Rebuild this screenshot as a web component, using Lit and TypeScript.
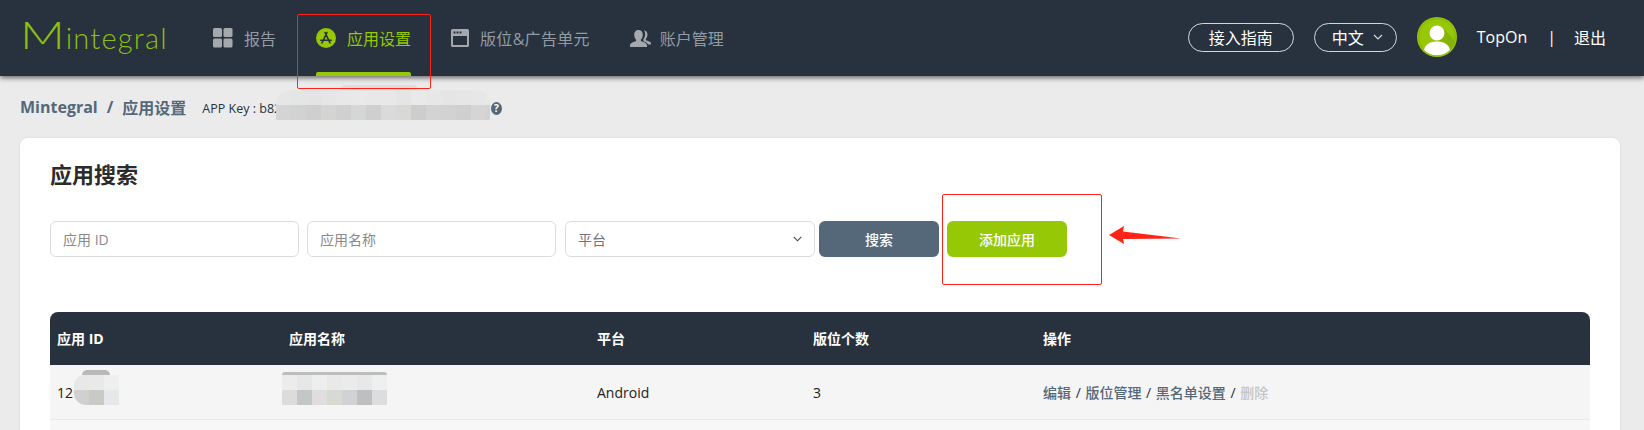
import { LitElement, css, html, svg } from "lit";
import { customElement, property } from "lit/decorators.js";
import { classMap } from "lit/directives/class-map.js";

type Patch = { x: number; y: number; w: number; radius: string; cols: string[][] };

// mosaic blocks that hide the app key and the ids in the reference
@customElement("redact-patch")
export class RedactPatch extends LitElement {
    static styles = css`
    :host {
      position: absolute;
      display: block;
      overflow: hidden;
    }
    .row {
      display: flex;
    }
    .cell {
      flex: none;
      width: 15px;
      height: 15px;
    }
  `;

    @property({ type: Array }) rows: string[][] = [];

    render() {
        return this.rows.map(
            (row) => html`<div class="row">${row.map((c) => html`<div class="cell" style="background:${c}"></div>`)}</div>`
        );
    }
}

const navIcons = {
    grid: svg`<rect x="0" y="0" width="9" height="9" rx="1.5"/><rect x="10.5" y="0" width="9" height="9" rx="1.5"/><rect x="0" y="10.5" width="9" height="9" rx="1.5"/><rect x="10.5" y="10.5" width="9" height="9" rx="1.5"/>`,
    store: svg`<circle cx="10" cy="10" r="10"/><path d="M9 4.500 14 14.800M11 4.500 6 14.800M4.800 12.300h10.400" fill="none" stroke="#27323e" stroke-width="1.600" stroke-linecap="round"/>`,
    win: svg`<path fill-rule="evenodd" d="M1.500 0h15A1.500 1.500 0 0 1 18 1.500v15a1.500 1.500 0 0 1-1.500 1.500h-15A1.500 1.500 0 0 1 0 16.500v-15A1.500 1.500 0 0 1 1.500 0zM2 7v9h14V7zM2.500 2.500v2h2v-2zM5.500 2.500v2h2v-2zM8.500 2.500v2h2v-2z"/>`,
    users: svg`<path d="M8.500 1c3 0 4.300 2.300 4.300 4.900 0 2.100-1 3.800-1.900 4.700v1.500c2.500.8 5.600 1.700 6.100 3.800v2H0v-2c.5-2.100 3.600-3 6.100-3.800v-1.500C5.200 9.700 4.200 8 4.200 5.900 4.200 3.300 5.500 1 8.500 1z"/><path d="M14 1.200c2.300.2 3.500 2.200 3.500 4.400 0 1.900-.8 3.500-1.600 4.200v1.400c2 .6 4.500 1.500 5.300 3.200v1.100h-2.800c-1-1.600-3.400-2.500-5-3.200V10c1-1 1.700-2.600 1.700-4.500 0-1.800-.4-3.300-1.100-4.300z"/>`,
};

@customElement("app-root")
export class AppRoot extends LitElement {
    static styles = css`
    :host {
      display: block;
      position: relative;
      width: 1644px;
      height: 430px;
      overflow: hidden;
      background: #ebebeb;
      font-family: "Open Sans", "Noto Sans CJK SC", sans-serif;
      font-size: 14px;
      color: #27323e;
    }

    .topbar {
      display: flex;
      align-items: center;
      height: 76px;
      padding: 0 38px 0 20px;
      box-sizing: border-box;
      background: #27323e;
      box-shadow: 0 2px 5px rgba(0, 0, 0, 0.55);
      position: relative;
    }
    .logo {
      width: 193px;
      font-family: "Lato", sans-serif;
      font-weight: 300;
      font-size: 29px;
      line-height: 70px;
      letter-spacing: 1.200px;
      color: #8fbe12;
      position: relative;
      top: -2px;
    }
    .logo b {
      display: inline-block;
      font-weight: 300;
      font-size: 38px;
      margin-right: 10px;
      transform: scaleX(1.3);
      transform-origin: left center;
    }
    .nav {
      display: flex;
      gap: 40px;
      align-self: stretch;
    }
    .nav-item {
      display: flex;
      align-items: center;
      gap: 11px;
      position: relative;
      font-size: 16px;
      color: #929ba4;
      box-sizing: border-box;
    }
    .nav-item svg {
      fill: #a5a9ae;
      flex: none;
    }
    .nav-item.wide {
      letter-spacing: 0.3px;
    }
    .nav-item.tight {
      gap: 9px;
    }
    .nav-item.active {
      color: #96c805;
    }
    .nav-item.active svg {
      fill: #96c805;
    }
    .nav-item.active::after {
      content: "";
      position: absolute;
      left: 0;
      right: 0;
      bottom: 0;
      height: 4px;
      border-radius: 2px 2px 0 0;
      background: #96c805;
    }

    .user {
      margin-left: auto;
      display: flex;
      align-items: center;
      color: #fff;
      font-size: 16px;
      padding-bottom: 3px;
    }
    .pill {
      display: flex;
      align-items: center;
      justify-content: center;
      gap: 9px;
      height: 29px;
      box-sizing: border-box;
      border: 1px solid #d5d8da;
      border-radius: 15px;
      margin-top: 1px;
    }
    .pill.guide {
      width: 106px;
      margin-right: 20px;
    }
    .pill.lang {
      width: 83px;
      margin-right: 20px;
      padding-left: 4px;
    }
    .avatar {
      margin-right: 20px;
      display: block;
    }
    .divider {
      margin: 0 18px 0 20px;
    }

    .crumbs {
      display: flex;
      align-items: center;
      height: 62px;
      padding-left: 20px;
      color: #54687a;
      font-size: 16px;
      font-weight: 700;
    }
    .crumb-sep {
      margin: 0 9px;
    }
    .app-key {
      margin-left: 16px;
      font-size: 12.500px;
      font-weight: 400;
      color: #27323e;
      position: relative;
      top: 1px;
    }
    .help {
      position: absolute;
      left: 491px;
      top: 102px;
      width: 11px;
      height: 13px;
      border-radius: 50%;
      background: #54687a;
      color: #fff;
      font-size: 10px;
      font-weight: 700;
      line-height: 13px;
      text-align: center;
    }

    .card {
      width: 1600px;
      height: 320px;
      margin-left: 20px;
      padding: 19px 30px 0;
      box-sizing: border-box;
      background: #fff;
      border-radius: 8px 8px 0 0;
      box-shadow: 0 0 3px rgba(0, 0, 0, 0.08);
    }
    .card h2 {
      margin: 0;
      font-size: 22px;
      line-height: 34px;
      font-weight: 700;
      color: #2b2b2b;
    }

    .search {
      display: flex;
      margin-top: 30px;
      height: 36px;
    }
    .field {
      width: 249px;
      height: 36px;
      box-sizing: border-box;
      margin-right: 8px;
      padding: 0 12px;
      border: 1px solid #dcdcdc;
      border-radius: 6px;
      background: #fff;
      font: inherit;
      font-size: 14px;
      color: #757575;
      outline: none;
    }
    .field.name {
      margin-right: 9px;
    }
    .field::placeholder {
      color: #8a8a8a;
      opacity: 1;
    }
    .select {
      display: flex;
      align-items: center;
      justify-content: space-between;
      width: 250px;
      margin-right: 4px;
    }
    .btn {
      display: flex;
      align-items: center;
      justify-content: center;
      width: 120px;
      height: 36px;
      border-radius: 6px;
      color: #fff;
      font-size: 14px;
      font-weight: 500;
    }
    .btn.slate {
      background: #54687a;
      margin-right: 8px;
    }
    .btn.green {
      background: #96c805;
    }

    .table {
      margin-top: 55px;
      border-radius: 8px 8px 0 0;
      overflow: hidden;
    }
    .tr {
      display: grid;
      grid-template-columns: 232px 308px 216px 230px 1fr;
      padding-left: 7px;
      align-items: center;
    }
    .tr.head {
      height: 53px;
      background: #27323e;
      color: #fff;
      font-weight: 700;
      font-size: 14px;
      padding-bottom: 2px;
      box-sizing: border-box;
    }
    .tr.body {
      height: 55px;
      box-sizing: border-box;
      background: #f5f5f5;
      border-bottom: 1px solid #e8e8e8;
      color: #222;
      font-size: 14px;
    }
    .tr.filler {
      height: 12px;
      background: #f7f7f7;
    }
    .ops {
      color: #54687a;
      font-weight: 500;
      font-size: 14px;
      word-spacing: 1px;
    }
    .ops .sep {
      color: #27323e;
      font-weight: 400;
    }
    .ops .off {
      color: #c4c4c4;
    }

    .note {
      position: absolute;
      border: 1px solid #ff2318;
      border-radius: 2px;
      box-sizing: border-box;
      pointer-events: none;
    }
    .note.nav-note {
      left: 297px;
      top: 14px;
      width: 134px;
      height: 75px;
    }
    .note.add-note {
      left: 942px;
      top: 194px;
      width: 160px;
      height: 91px;
    }
    .arrow {
      position: absolute;
      left: 1105px;
      top: 222px;
    }
    .cap {
      position: absolute;
    }
    .cap.key {
      left: 340px;
      top: 85px;
      width: 78px;
      height: 5px;
      border-radius: 10px 10px 0 0;
      background: #dddeda;
    }
    .cap.id {
      left: 82px;
      top: 370px;
      width: 28px;
      height: 5px;
      border-radius: 14px 14px 0 0;
      background: #b9b9b9;
    }
    .cap.name {
      left: 282px;
      top: 372px;
      width: 105px;
      height: 3px;
      border-radius: 3px 3px 0 0;
      background: #bdbdbd;
    }
  `;

    patches: Patch[] = [
        {
            x: 276,
            y: 90,
            w: 214,
            radius: "14px 14px 0 0",
            cols: [
                ["#e6e6e6", "#e4e5e5", "#e4e4e4", "#e6e6e6", "#e7e8e7", "#e9e9e9", "#e8e8e8", "#e8e8e8", "#e4e5e4", "#e9e9e8", "#e7e7e7", "#e5e5e5", "#e6e6e6", "#e7e7e7", "#e8e8e8"],
                ["#d4d4d4", "#d2d2d2", "#cfcfcf", "#d4d4d2", "#cfd0cf", "#d5d6d6", "#cfcfcf", "#d9dada", "#d8d8d5", "#cdcdcd", "#d3d3d3", "#d2d2d0", "#cfcfcf", "#d5d5d5", "#d2d2d2"],
            ],
        },
        {
            x: 74,
            y: 375,
            w: 45,
            radius: "10px 0 0 12px",
            cols: [
                ["#e8e8e8", "#e8e9e8", "#eeefef"],
                ["#d0d0d0", "#c9cac5", "#e6e7e8"],
            ],
        },
        {
            x: 282,
            y: 375,
            w: 105,
            radius: "0",
            cols: [
                ["#ececec", "#e6e7e7", "#edeeee", "#e9e9e7", "#ebebeb", "#e7e8e9", "#eef0ef"],
                ["#dddcda", "#c3c7c8", "#dfdddd", "#d7d9d3", "#d1d2d5", "#bfbfbf", "#dcddde"],
            ],
        },
    ];

    navItem(icon: keyof typeof navIcons, label: string, opts: { active?: boolean; wide?: boolean; tight?: boolean; w?: number; h?: number } = {}) {
        const { active = false, wide = false, tight = false, w = 20, h = 20 } = opts;
        return html`<div class=${classMap({ "nav-item": true, active, wide, tight })}>
            <svg width=${w} height=${h} viewBox="0 0 ${w} ${h}">${navIcons[icon]}</svg>
            <span>${label}</span>
        </div>`;
    }

    render() {
        return html`
            <div class="topbar">
                <div class="logo"><b>M</b>integral</div>
                <div class="nav">
                    ${this.navItem("grid", "报告")}
                    ${this.navItem("store", "应用设置", { active: true })}
                    ${this.navItem("win", "版位&广告单元", { wide: true, w: 18, h: 18 })}
                    ${this.navItem("users", "账户管理", { tight: true, w: 21, h: 19 })}
                </div>
                <div class="user">
                    <div class="pill guide">接入指南</div>
                    <div class="pill lang">
                        <span>中文</span>
                        <svg width="10" height="6" viewBox="0 0 10 6"><path d="M1 1l4 4 4-4" fill="none" stroke="#d5d8da" stroke-width="1.200"/></svg>
                    </div>
                    <svg class="avatar" width="40" height="40" viewBox="0 0 40 40">
                        <circle cx="20" cy="20" r="20" fill="#96c805"/>
                        <circle cx="20" cy="20" r="18.300" fill="none" stroke="#7da50d" stroke-width="0.600"/>
                        <path d="M24 9 38 24a19 19 0 0 1-8 12L20 22z" fill="#86b304"/>
                        <circle cx="20" cy="16" r="7.500" fill="#fff"/>
                        <path d="M7 33c1-6 7-8.500 13-8.500S32 27 33 33a18.500 18.500 0 0 1-26 0z" fill="#fff"/>
                    </svg>
                    <span>TopOn</span>
                    <span class="divider">|</span>
                    <span>退出</span>
                </div>
            </div>

            <div class="crumbs">
                <span>Mintegral</span><span class="crumb-sep">/</span><span>应用设置</span>
                <span class="app-key">APP Key : b82</span>
            </div>

            <div class="card">
                <h2>应用搜索</h2>
                <div class="search">
                    <input class="field" placeholder="应用 ID" />
                    <input class="field name" placeholder="应用名称" />
                    <div class="field select">
                        <span>平台</span>
                        <svg width="9" height="6" viewBox="0 0 9 6"><path d="M.7.800l3.800 4 3.800-4" fill="none" stroke="#444" stroke-width="1.100"/></svg>
                    </div>
                    <div class="btn slate">搜索</div>
                    <div class="btn green">添加应用</div>
                </div>

                <div class="table">
                    <div class="tr head">
                        <div>应用 ID</div>
                        <div>应用名称</div>
                        <div>平台</div>
                        <div>版位个数</div>
                        <div>操作</div>
                    </div>
                    <div class="tr body">
                        <div>12</div>
                        <div></div>
                        <div>Android</div>
                        <div>3</div>
                        <div class="ops">
                            编辑 <span class="sep">/</span> 版位管理 <span class="sep">/</span> 黑名单设置 <span class="sep">/</span>
                            <span class="off">删除</span>
                        </div>
                    </div>
                    <div class="tr filler"></div>
                </div>
            </div>

            <div class="cap key"></div>
            <div class="cap id"></div>
            <div class="cap name"></div>
            ${this.patches.map(
                (p) => html`<redact-patch style="left:${p.x}px;top:${p.y}px;width:${p.w}px;border-radius:${p.radius}" .rows=${p.cols}></redact-patch>`
            )}
            <div class="help">?</div>

            <div class="note nav-note"></div>
            <div class="note add-note"></div>
            <svg class="arrow" width="80" height="26" viewBox="0 0 80 26">
                <path d="M4 13 19 4l-1 5.500L76 16.500 18 17l1 5z" fill="#ff2318"/>
            </svg>
        `;
    }
}
